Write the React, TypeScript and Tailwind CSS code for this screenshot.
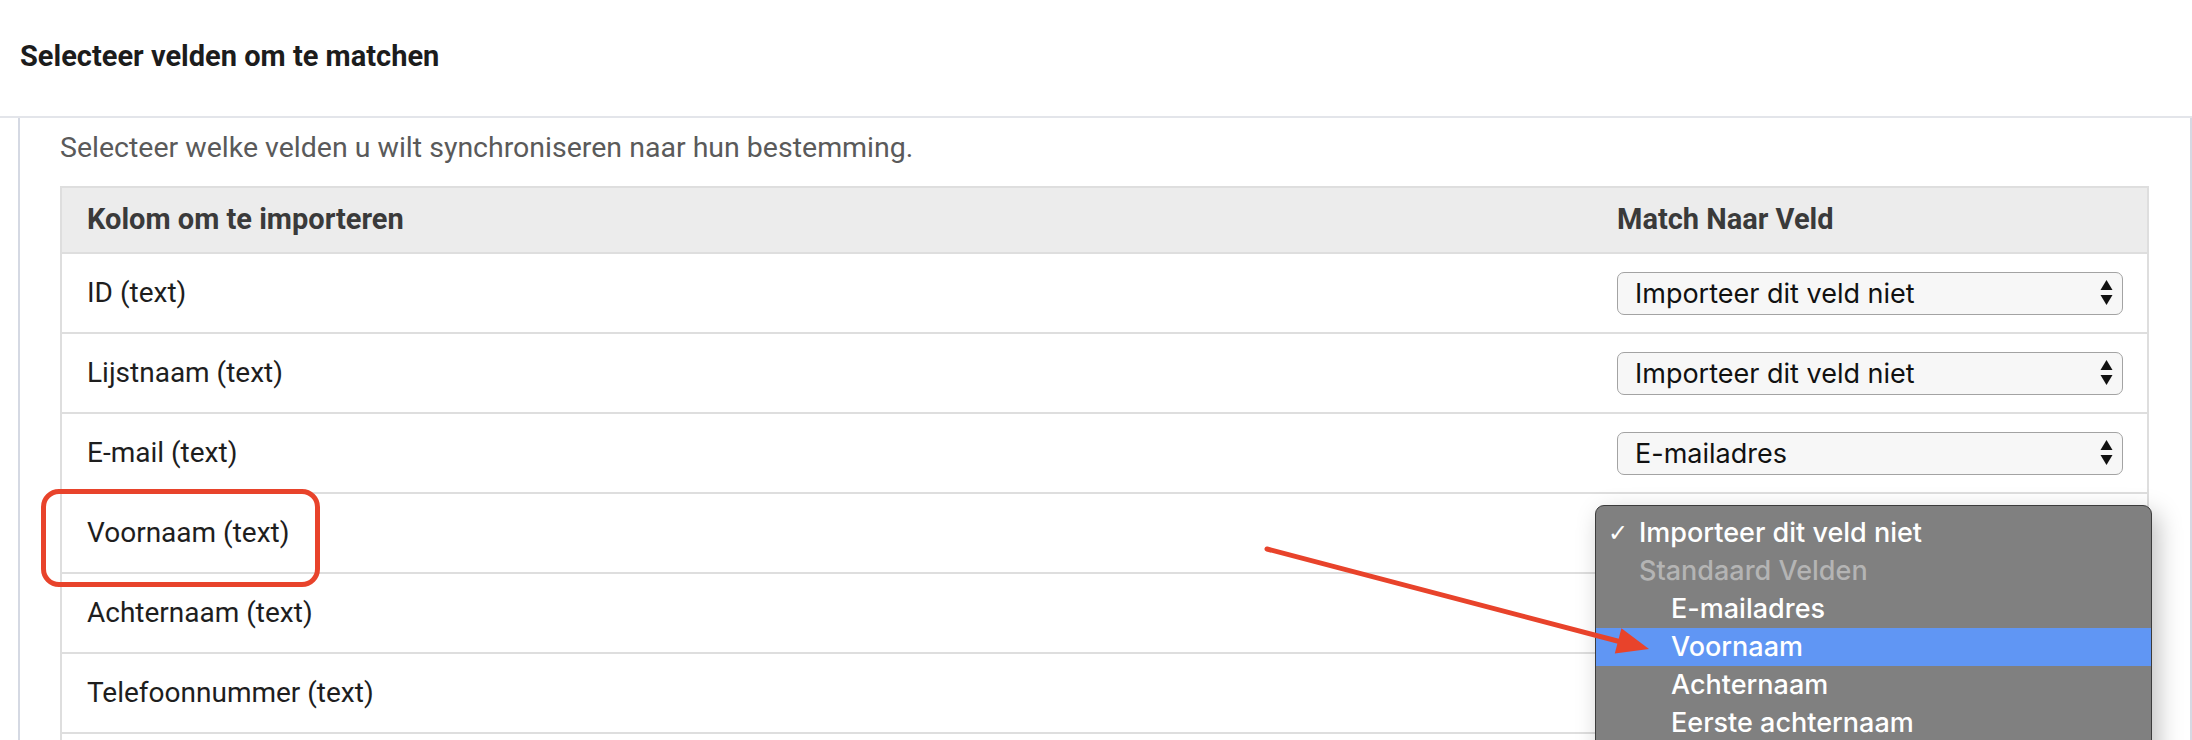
import React from "react";

const rows: { label: string; value: string | null }[] = [
  { label: "ID (text)", value: "Importeer dit veld niet" },
  { label: "Lijstnaam (text)", value: "Importeer dit veld niet" },
  { label: "E-mail (text)", value: "E-mailadres" },
  { label: "Voornaam (text)", value: null },
  { label: "Achternaam (text)", value: null },
  { label: "Telefoonnummer (text)", value: null },
  { label: "", value: null },
];

function SelectBox({ value }: { value: string }) {
  return (
    <div className="w-full h-[43px] rounded-[7px] border-[1.5px] border-[#a3a3a3] bg-[#f7f7f7] flex items-center justify-between pl-[17px] pr-[9px] font-['Inter'] text-[27px] text-[#111]">
      <span className="leading-none">{value}</span>
      <svg width="13" height="26" viewBox="0 0 13 26">
        <polygon points="6.5,0 12.5,10 0.5,10" fill="#111" />
        <polygon points="0.5,15 12.5,15 6.5,25" fill="#111" />
      </svg>
    </div>
  );
}

export default function App() {
  return (
    <div className="relative w-[2192px] h-[740px] bg-white font-['Roboto',_sans-serif] overflow-hidden">
      <div className="h-[118px] flex items-center pl-[20px] border-b-2 border-[#e3e5ea]">
        <h2 className="text-[29px] font-bold text-[#1c1c1c] leading-none -mt-[4px]">
          Selecteer velden om te matchen
        </h2>
      </div>
      <div className="ml-[18px] border-l-2 border-r-2 border-[#d5d9e3] pl-[40px] pr-[41px] pt-[12px] h-[622px]">
        <p className="text-[28.5px] leading-[36px] text-[#5a5a5a] mb-[20px]">
          Selecteer welke velden u wilt synchroniseren naar hun bestemming.
        </p>
        <div className="border-2 border-[#dedede]">
          <div className="grid grid-cols-[1fr_530px] h-[64px] bg-[#ececec] items-center text-[29px] font-bold text-[#3a3a3a]">
            <div className="pl-[25px]">Kolom om te importeren</div>
            <div>Match Naar Veld</div>
          </div>
          {rows.map((r, i) => (
            <div
              key={i}
              className="grid grid-cols-[1fr_530px] h-[80px] border-t-2 border-[#dedede] items-center text-[28px] text-[#1e1e1e]"
            >
              <div className="pl-[25px]">{r.label}</div>
              <div className="pr-[24px]">{r.value && <SelectBox value={r.value} />}</div>
            </div>
          ))}
        </div>
      </div>

      {/* Native popup menu */}
      <div className="absolute left-[1595px] top-[505px] w-[557px] h-[280px] rounded-[9px] bg-[#808080] border border-[#3c3c3c] shadow-[6px_8px_24px_rgba(0,0,0,0.25)] pt-[8px] font-['Inter'] text-[27px] font-medium text-white overflow-hidden">
        <div className="h-[38px] flex items-center pl-[12px]">
          <span className="w-[31px] font-['DejaVu_Sans'] text-[24px]">✓</span>
          <span>Importeer dit veld niet</span>
        </div>
        <div className="h-[38px] flex items-center pl-[43px] text-[#b4b4b4]">Standaard Velden</div>
        <div className="h-[38px] flex items-center pl-[75px]">E-mailadres</div>
        <div className="h-[38px] flex items-center pl-[75px] bg-[#6096f4]">Voornaam</div>
        <div className="h-[38px] flex items-center pl-[75px]">Achternaam</div>
        <div className="h-[38px] flex items-center pl-[75px]">Eerste achternaam</div>
      </div>

      {/* Annotation: red rounded rectangle */}
      <div className="absolute left-[41px] top-[489px] w-[279px] h-[98px] border-[5px] border-[#e8432b] rounded-[18px] pointer-events-none" />

      {/* Annotation: red arrow */}
      <svg
        className="absolute left-0 top-0 pointer-events-none"
        width="2192"
        height="740"
        viewBox="0 0 2192 740"
      >
        <line x1="1267" y1="549" x2="1625" y2="643" stroke="#e8432b" strokeWidth="5" strokeLinecap="round" />
        <polygon points="1649,649 1614.8,653.5 1621.4,628.3" fill="#e8432b" />
      </svg>
    </div>
  );
}
